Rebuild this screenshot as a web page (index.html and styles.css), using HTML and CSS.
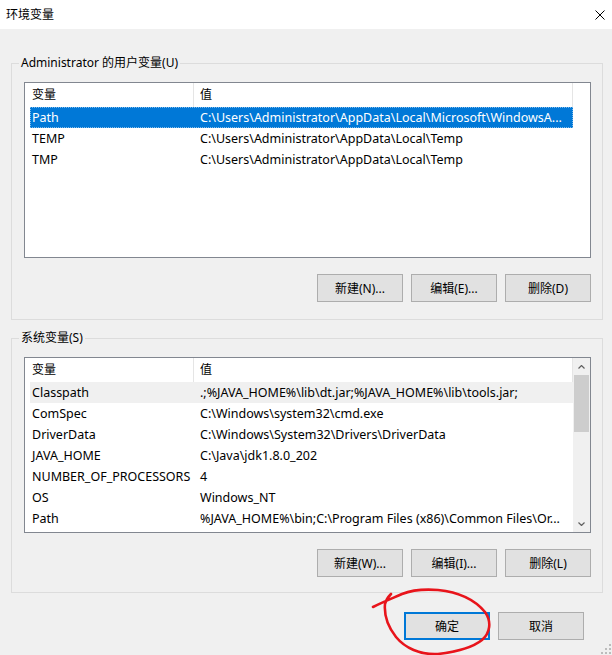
FILE: index.html
```html
<!DOCTYPE html>
<html>
<head lang="zh-CN">
    <meta charset="UTF-8">
    <title>环境变量</title>
    <link rel="stylesheet" href="styles.css">
</head>
<body>
<div class="titlebar">
    <span class="title">环境变量</span>
    <svg class="close" width="10" height="10" viewBox="0 0 10 10">
        <path d="M0.5,0.5 L9.5,9.5 M9.5,0.5 L0.5,9.5" stroke="#000" stroke-width="1" fill="none"/>
    </svg>
</div>

<fieldset class="group group-user">
    <legend>Administrator 的用户变量(U)</legend>
    <div class="list">
        <div class="list-body">
            <div class="row head"><span class="c1">变量</span><span class="c2">值</span></div>
            <div class="row sel"><span class="c1">Path</span><span class="c2">C:\Users\Administrator\AppData\Local\Microsoft\WindowsA...</span></div>
            <div class="row"><span class="c1">TEMP</span><span class="c2">C:\Users\Administrator\AppData\Local\Temp</span></div>
            <div class="row"><span class="c1">TMP</span><span class="c2">C:\Users\Administrator\AppData\Local\Temp</span></div>
        </div>
    </div>
    <div class="btns">
        <div class="btn">新建(N)...</div>
        <div class="btn">编辑(E)...</div>
        <div class="btn">删除(D)</div>
    </div>
</fieldset>

<fieldset class="group group-sys">
    <legend>系统变量(S)</legend>
    <div class="list">
        <div class="list-body">
            <div class="row head"><span class="c1">变量</span><span class="c2">值</span></div>
            <div class="row dim"><span class="c1">Classpath</span><span class="c2">.;%JAVA_HOME%\lib\dt.jar;%JAVA_HOME%\lib\tools.jar;</span></div>
            <div class="row"><span class="c1">ComSpec</span><span class="c2">C:\Windows\system32\cmd.exe</span></div>
            <div class="row"><span class="c1">DriverData</span><span class="c2">C:\Windows\System32\Drivers\DriverData</span></div>
            <div class="row"><span class="c1">JAVA_HOME</span><span class="c2">C:\Java\jdk1.8.0_202</span></div>
            <div class="row"><span class="c1">NUMBER_OF_PROCESSORS</span><span class="c2">4</span></div>
            <div class="row"><span class="c1">OS</span><span class="c2">Windows_NT</span></div>
            <div class="row"><span class="c1">Path</span><span class="c2">%JAVA_HOME%\bin;C:\Program Files (x86)\Common Files\Or...</span></div>
        </div>
        <div class="scrollbar">
            <div class="arrow">
                <svg width="7" height="4" viewBox="0 0 7 4"><path d="M0.5,3.5 L3.5,0.5 L6.5,3.5" stroke="#606060" stroke-width="1.2" fill="none"/></svg>
            </div>
            <div class="thumb"></div>
            <div class="track"></div>
            <div class="arrow">
                <svg width="7" height="4" viewBox="0 0 7 4"><path d="M0.5,0.5 L3.5,3.5 L6.5,0.5" stroke="#606060" stroke-width="1.2" fill="none"/></svg>
            </div>
        </div>
    </div>
    <div class="btns">
        <div class="btn">新建(W)...</div>
        <div class="btn">编辑(I)...</div>
        <div class="btn">删除(L)</div>
    </div>
</fieldset>

<div class="footer">
    <div class="btn default">确定</div>
    <div class="btn">取消</div>
</div>

<!-- 红圈标注 -->
<svg class="mark" width="140" height="80" viewBox="0 0 140 80">
    <path d="M13,27 C23,22 33,18 42,14 C52,10 65,9 78,10 C98,12 115,20 125,32 C132,42 130,53 122,60 C112,68 95,72 78,74 C60,75 45,68 36,57 C28,47 24,35 25,24 C26,20 28,17 31,14"
          stroke="#e8141b" stroke-width="2.6" fill="none" stroke-linecap="round" stroke-linejoin="round"/>
</svg>

<svg class="grip" width="12" height="12" viewBox="0 0 12 12">
    <rect x="9" y="1" width="2" height="2" fill="#bcbcbc"/>
    <rect x="9" y="5" width="2" height="2" fill="#bcbcbc"/>
    <rect x="5" y="5" width="2" height="2" fill="#bcbcbc"/>
    <rect x="9" y="9" width="2" height="2" fill="#bcbcbc"/>
    <rect x="5" y="9" width="2" height="2" fill="#bcbcbc"/>
    <rect x="1" y="9" width="2" height="2" fill="#bcbcbc"/>
</svg>
</body>
</html>
```

FILE: styles.css
```css
* {
    box-sizing: border-box;
}

body {
    margin: 0;
    width: 612px;
    height: 655px;
    overflow: hidden;
    position: relative;
    background: #f0f0f0;
    font-family: "Noto Sans", "Noto Sans CJK SC", sans-serif;
    font-size: 12px;
    color: #000;
}

.titlebar {
    display: flex;
    align-items: center;
    justify-content: space-between;
    height: 29px;
    padding: 0 7px 0 6px;
    background: #fff;
}

.titlebar .title {
    line-height: 29px;
}

.group {
    width: 592px;
    margin: 0 9px 0 11px;
    padding: 11px 11px 17px 12px;
    border: 1px solid #dcdcdc;
    min-width: 0;
}

.group-user {
    margin-top: 26px;
}

.group-sys {
    margin-top: 10px;
    padding-bottom: 15px;
}

.group legend {
    margin-left: -5px;
    padding: 0 2px;
    line-height: 16px;
}

.list {
    display: flex;
    height: 176px;
    border: 1px solid #828790;
    background: #fff;
}

.list-body {
    width: 548px;
    flex: none;
}

.row {
    display: grid;
    grid-template-columns: 164px 379px;
    height: 21px;
    line-height: 21px;
    margin-left: 5px;
    font-size: 12.5px;
    white-space: nowrap;
}

.row span {
    overflow: hidden;
}

.row .c1 {
    padding-left: 2px;
}

.row .c2 {
    padding-left: 6px;
}

.row.head {
    grid-template-columns: 169px 379px;
    height: 24px;
    line-height: 24px;
    margin-left: 0;
    font-size: 12px;
}

.row.head span {
    border-right: 1px solid #e5e5e5;
}

.row.head .c1 {
    padding-left: 7px;
}

.row.sel {
    background: #0078d7;
    color: #fff;
    outline: 1px dotted #7fbbeb;
    outline-offset: -1px;
}

.row.dim {
    background: #f0f0f0;
}

.scrollbar {
    display: flex;
    flex-direction: column;
    width: 17px;
    margin-left: auto;
    background: #f0f0f0;
}

.scrollbar .arrow {
    display: flex;
    align-items: center;
    justify-content: center;
    height: 17px;
}

.scrollbar .thumb {
    height: 57px;
    margin: 0 1px;
    background: #cdcdcd;
}

.scrollbar .track {
    flex: 1;
}

.btns {
    display: flex;
    justify-content: flex-end;
    gap: 8px;
    margin-top: 16px;
}

.btn {
    display: flex;
    align-items: center;
    justify-content: center;
    width: 86px;
    height: 28px;
    border: 1px solid #adadad;
    background: #e1e1e1;
}

.btn.default {
    border-color: #0078d7;
    box-shadow: inset 0 0 0 1px #0078d7;
}

.footer {
    display: flex;
    justify-content: flex-end;
    gap: 8px;
    margin-top: 19px;
    padding-right: 28px;
}

.mark {
    position: absolute;
    left: 360px;
    top: 580px;
}

.grip {
    position: absolute;
    right: 0;
    bottom: 0;
}
```
